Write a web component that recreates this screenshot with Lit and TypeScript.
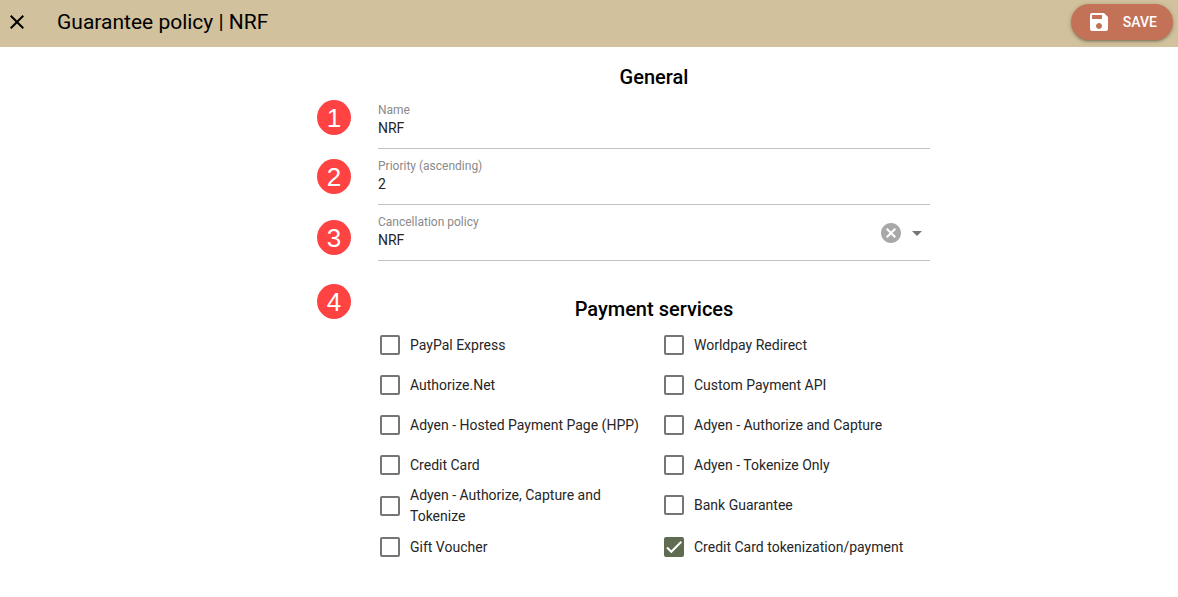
import { LitElement, html, css } from "lit";
import { customElement, property, state } from "lit/decorators.js";
import { styleMap } from "lit/directives/style-map.js";

interface Service {
  id: string;
  label: string;
  checked: boolean;
}

const SERVICES: Service[] = [
  { id: "paypal", label: "PayPal Express", checked: false },
  { id: "worldpay", label: "Worldpay Redirect", checked: false },
  { id: "authorize", label: "Authorize.Net", checked: false },
  { id: "custom", label: "Custom Payment API", checked: false },
  { id: "adyen-hpp", label: "Adyen - Hosted Payment Page (HPP)", checked: false },
  { id: "adyen-capture", label: "Adyen - Authorize and Capture", checked: false },
  { id: "credit", label: "Credit Card", checked: false },
  { id: "adyen-token", label: "Adyen - Tokenize Only", checked: false },
  { id: "adyen-all", label: "Adyen - Authorize, Capture and Tokenize", checked: false },
  { id: "bank", label: "Bank Guarantee", checked: false },
  { id: "gift", label: "Gift Voucher", checked: false },
  { id: "tokenization", label: "Credit Card tokenization/payment", checked: true },
];

// Numbered callouts laid over the form, with their distance from its top.
const MARKERS = [
  { n: 1, top: 53 },
  { n: 2, top: 112 },
  { n: 3, top: 173 },
  { n: 4, top: 237 },
];

@customElement("service-checkbox")
export class ServiceCheckbox extends LitElement {
  @property() name = "";
  @property() label = "";
  @property({ type: Boolean }) checked = false;

  static styles = css`
    :host {
      display: block;
    }
    .row {
      display: flex;
      align-items: center;
      min-height: 40px;
      cursor: pointer;
      font-size: 14px;
      line-height: 21px;
      color: #262626;
    }
    .box {
      display: grid;
      flex: none;
      width: 20px;
      height: 20px;
      margin: 0 10px;
    }
    .input,
    .tick {
      grid-area: 1 / 1;
      width: 20px;
      height: 20px;
      margin: 0;
      box-sizing: border-box;
    }
    .input {
      appearance: none;
      border: 2px solid #757575;
      border-radius: 2px;
      cursor: pointer;
    }
    .input:checked {
      background: #606c52;
      border-color: #606c52;
    }
    .tick {
      visibility: hidden;
      pointer-events: none;
      fill: none;
      stroke: #fff;
      stroke-width: 2;
    }
    .input:checked + .tick {
      visibility: visible;
    }
  `;

  render() {
    return html`
      <label class="row">
        <span class="box">
          <input
            class="input"
            type="checkbox"
            name=${this.name}
            .checked=${this.checked}
            @change=${(e: Event) => (this.checked = (e.target as HTMLInputElement).checked)}
          />
          <svg class="tick" viewBox="0 0 20 20" aria-hidden="true">
            <path d="M3 10.5 L7.3 14.8 L17.3 4.8" />
          </svg>
        </span>
        <span>${this.label}</span>
      </label>
    `;
  }
}

@customElement("app-root")
export class AppRoot extends LitElement {
  @state() private policy = "NRF";

  static styles = css`
    :host {
      display: block;
      min-height: 100vh;
      background: #fff;
      color: #000;
      font-family: Roboto, "Liberation Sans", sans-serif;
      font-size: 14px;
      line-height: 21px;
    }
    .bar {
      display: flex;
      align-items: center;
      height: 47px;
      padding: 0 5px 3px;
      box-sizing: border-box;
      background: #d1c19c;
    }
    .close,
    .clear {
      display: flex;
      padding: 0;
      border: 0;
      background: none;
      color: inherit;
      cursor: pointer;
    }
    .icon {
      display: block;
      width: 24px;
      height: 24px;
      fill: currentColor;
    }
    .title {
      flex: 1;
      margin: 0 28px;
      font-size: 21px;
      line-height: 32px;
      font-weight: 400;
    }
    .save {
      display: flex;
      align-items: center;
      gap: 12px;
      height: 36px;
      padding: 0 16px;
      border: 0;
      border-radius: 18px;
      background: #c37258;
      box-shadow: 0 1px 5px rgba(0, 0, 0, 0.2), 0 2px 2px rgba(0, 0, 0, 0.14),
        0 3px 1px -2px rgba(0, 0, 0, 0.12);
      color: #fff;
      font: 500 14px/24px Roboto, "Liberation Sans", sans-serif;
      text-transform: uppercase;
      cursor: pointer;
    }
    .page {
      padding: 0 16px 24px 146px;
    }
    .form {
      position: relative;
      max-width: 552px;
      margin: 0 auto;
    }
    .heading {
      margin: 0;
      padding: 14px 0 0;
      font-size: 20px;
      line-height: 32px;
      font-weight: 500;
      text-align: center;
    }
    .heading.services {
      padding-top: 32px;
    }
    .field {
      display: flex;
      align-items: center;
      height: 56px;
      box-sizing: border-box;
      border-bottom: 1px solid #c2c2c2;
    }
    .entry {
      flex: 1;
      display: flex;
      flex-direction: column;
      align-self: stretch;
      padding-top: 7px;
    }
    .caption {
      font-size: 12px;
      line-height: 20px;
      color: #8a8a8a;
    }
    .control {
      appearance: none;
      width: 100%;
      height: 16px;
      margin: 0;
      padding: 0;
      border: 0;
      outline: 0;
      background: none;
      color: #262626;
      font: 400 14px/16px Roboto, "Liberation Sans", sans-serif;
    }
    .actions {
      display: flex;
      gap: 2px;
      padding-right: 1px;
    }
    .clear {
      color: #a8a8a8;
    }
    .arrow {
      color: #757575;
      pointer-events: none;
    }
    .grid {
      display: grid;
      grid-template-columns: 1fr 1fr;
      margin: 0 -8px;
    }
    .marker {
      position: absolute;
      left: -61px;
      width: 34px;
      height: 35px;
      border-radius: 50%;
      background: #ff4242;
      color: #fff;
      font: 400 26px/36px "Liberation Sans", Arial, sans-serif;
      text-align: center;
    }
  `;

  render() {
    return html`
      <header class="bar">
        <button class="close" aria-label="Close">
          <svg class="icon" viewBox="0 0 24 24">
            <path
              d="M19 6.41 17.59 5 12 10.59 6.41 5 5 6.41 10.59 12 5 17.59 6.41 19 12 13.41 17.59 19 19 17.59 13.41 12z"
            />
          </svg>
        </button>
        <h1 class="title">Guarantee policy | NRF</h1>
        <button class="save">
          <svg class="icon" viewBox="0 0 24 24" aria-hidden="true">
            <path
              d="M17 3H5a2 2 0 0 0-2 2v14a2 2 0 0 0 2 2h14c1.100 0 2-.9 2-2V7l-4-4zm-5 16c-1.660 0-3-1.340-3-3s1.340-3 3-3 3 1.340 3 3-1.340 3-3 3zm3-10H5V5h10v4z"
            />
          </svg>
          <span>Save</span>
        </button>
      </header>
      <main class="page">
        <form class="form" @submit=${(e: Event) => e.preventDefault()}>
          <h2 class="heading">General</h2>
          <div class="field">
            <div class="entry">
              <label class="caption" for="name">Name</label>
              <input class="control" id="name" type="text" value="NRF" />
            </div>
          </div>
          <div class="field">
            <div class="entry">
              <label class="caption" for="priority">Priority (ascending)</label>
              <input class="control" id="priority" type="text" inputmode="numeric" value="2" />
            </div>
          </div>
          <div class="field">
            <div class="entry">
              <label class="caption" for="policy">Cancellation policy</label>
              <select
                class="control"
                id="policy"
                .value=${this.policy}
                @change=${(e: Event) => (this.policy = (e.target as HTMLSelectElement).value)}
              >
                <option value="NRF" selected>NRF</option>
                <option value=""></option>
              </select>
            </div>
            <div class="actions">
              <button class="clear" type="button" aria-label="Clear" @click=${() => (this.policy = "")}>
                <svg class="icon" viewBox="0 0 24 24">
                  <path
                    d="M12 2C6.470 2 2 6.470 2 12s4.470 10 10 10 10-4.470 10-10S17.530 2 12 2zm5 13.590L15.590 17 12 13.410 8.410 17 7 15.590 10.590 12 7 8.410 8.410 7 12 10.590 15.590 7 17 8.410 13.410 12 17 15.590z"
                  />
                </svg>
              </button>
              <svg class="icon arrow" viewBox="0 0 24 24" aria-hidden="true"><path d="m7 10 5 5 5-5z" /></svg>
            </div>
          </div>
          <h2 class="heading services">Payment services</h2>
          <div class="grid">
            ${SERVICES.map(
              (s) => html`<service-checkbox
                .name=${s.id}
                .label=${s.label}
                .checked=${s.checked}
              ></service-checkbox>`
            )}
          </div>
          ${MARKERS.map(
            (m) => html`<span class="marker" style=${styleMap({ top: `${m.top}px` })}>${m.n}</span>`
          )}
        </form>
      </main>
    `;
  }
}
